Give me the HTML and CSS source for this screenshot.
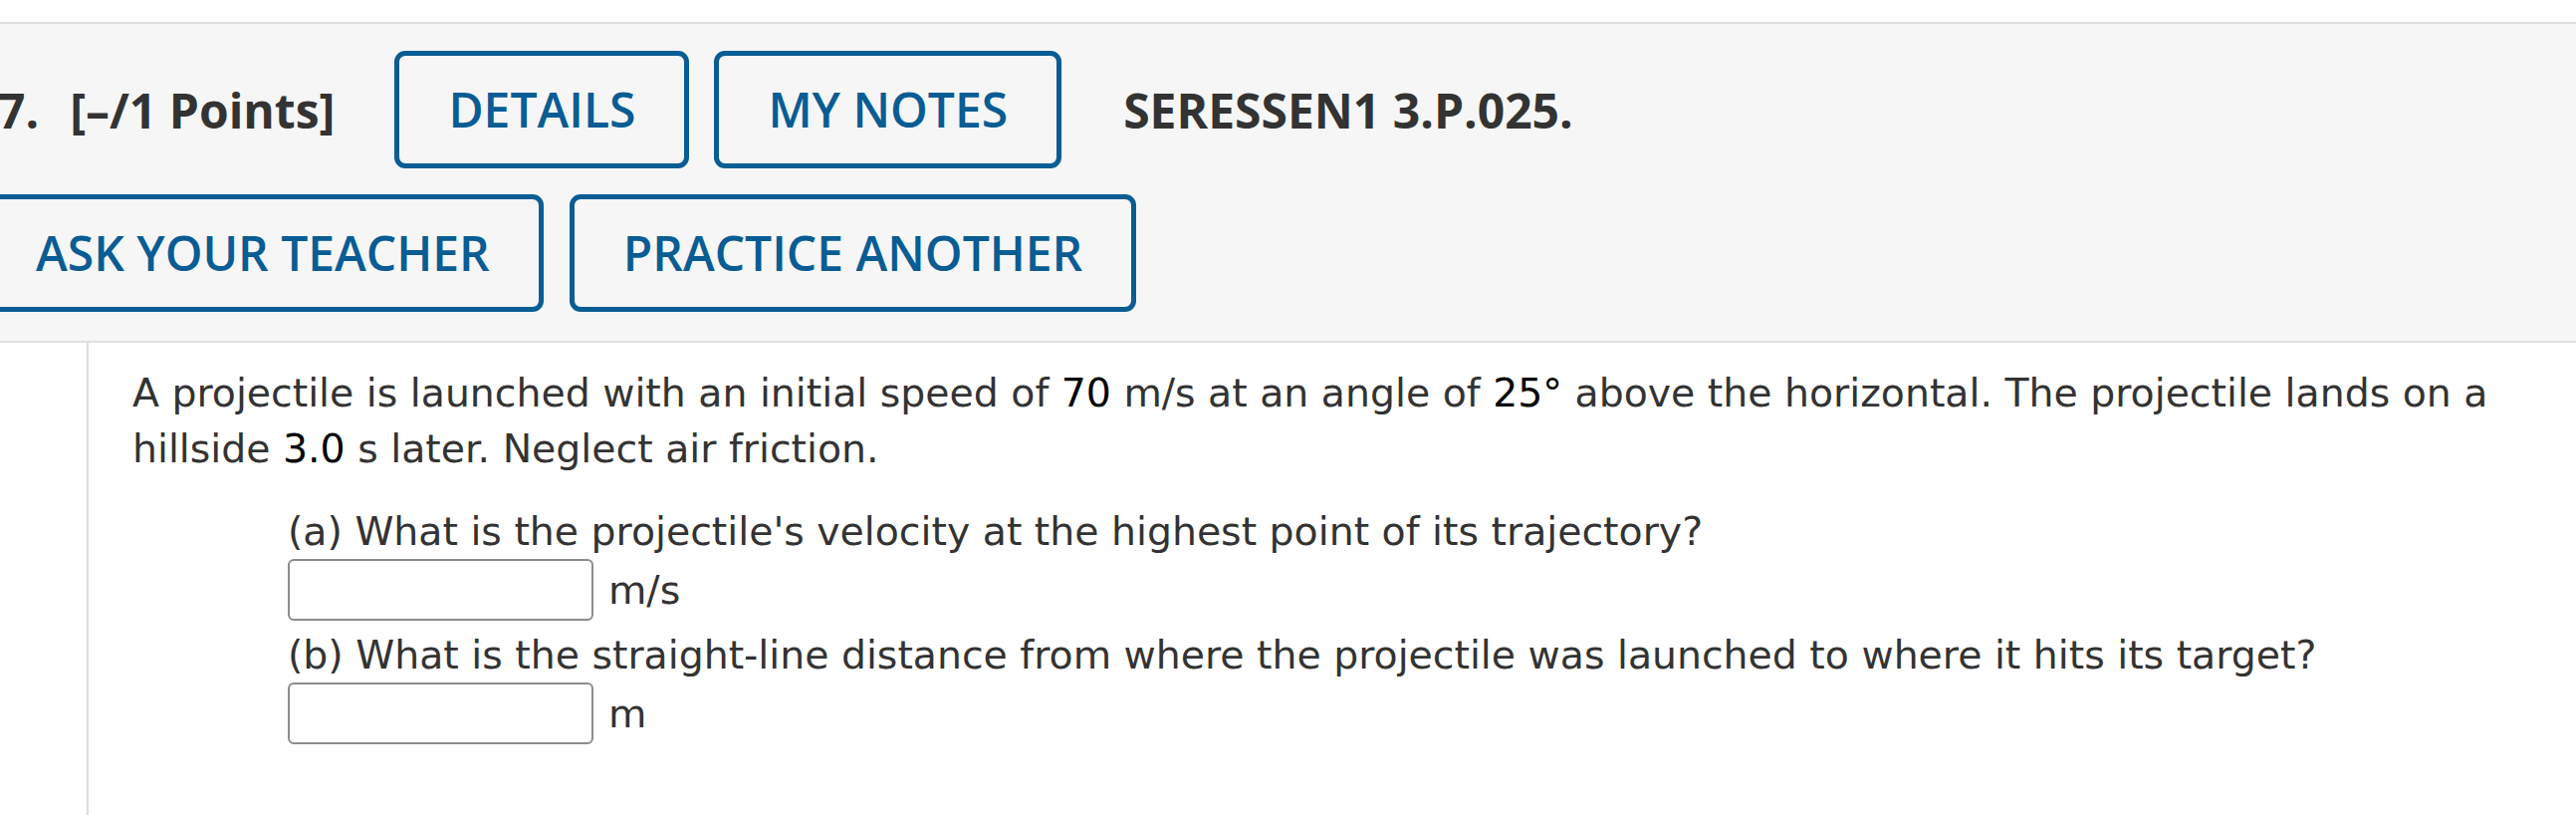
FILE: index.html
```html
<!DOCTYPE html>
<html lang="en">
<head>
<meta charset="utf-8">
<title>SERESSEN1 3.P.025.</title>
<link rel="stylesheet" href="styles.css">
</head>
<body>
<div class="question">
  <div class="q-header">
    <div class="q-row q-row-top">
      <span class="q-num">7.</span>
      <span class="q-points">[&ndash;/1 Points]</span>
      <button class="q-btn" type="button">DETAILS</button>
      <button class="q-btn" type="button">MY NOTES</button>
      <span class="q-code">SERESSEN1 3.P.025.</span>
    </div>
    <div class="q-row q-row-bottom">
      <button class="q-btn" type="button">ASK YOUR TEACHER</button>
      <button class="q-btn" type="button">PRACTICE ANOTHER</button>
    </div>
  </div>
  <div class="q-body">
    <p class="q-text">A projectile is launched with an initial speed of <span class="num">70</span> m/s at an angle of <span class="num">25&deg;</span> above the horizontal. The projectile lands on a hillside <span class="num">3.0</span> s later. Neglect air friction.</p>
    <div class="q-parts">
      <div class="q-part">
        <div class="q-prompt">(a) What is the projectile's velocity at the highest point of its trajectory?</div>
        <div class="q-answer"><input class="answer-box" type="text" aria-label="velocity"><span class="unit">m/s</span></div>
      </div>
      <div class="q-part">
        <div class="q-prompt">(b) What is the straight-line distance from where the projectile was launched to where it hits its target?</div>
        <div class="q-answer"><input class="answer-box" type="text" aria-label="distance"><span class="unit">m</span></div>
      </div>
    </div>
  </div>
</div>
</body>
</html>
```
FILE: styles.css
```css
html, body {
  margin: 0;
  padding: 0;
  background: #ffffff;
  overflow: hidden;
}

.question {
  padding-top: 22px;
}

.q-header {
  background: #f6f6f6;
  border-top: 2px solid #e0e0e0;
  border-bottom: 2px solid #e0e0e0;
  padding: 27px 0 29px 0;
  display: flex;
  flex-direction: column;
  gap: 26px;
  font-family: "Open Sans", "Liberation Sans", sans-serif;
}

.q-row {
  display: flex;
  align-items: center;
}

.q-row-top {
  margin-left: -2px;
}

.q-row-bottom {
  margin-left: -18px;
  gap: 26px;
}

.q-num,
.q-points,
.q-code {
  font-weight: 700;
  font-size: 48px;
  color: #333333;
  white-space: nowrap;
}

.q-points {
  margin-left: 31px;
  margin-right: 60px;
}

.q-code {
  margin-left: 62px;
}

.q-btn {
  font-family: "Open Sans", "Liberation Sans", sans-serif;
  font-weight: 600;
  font-size: 48px;
  line-height: 62px;
  color: #095c94;
  background: transparent;
  border: 5px solid #095c94;
  border-radius: 11px;
  padding: 23px 49px;
  margin: 0;
  white-space: nowrap;
}

.q-row-top .q-btn + .q-btn {
  margin-left: 25px;
}

.q-body {
  margin-left: 87px;
  border-left: 2px solid #dddddd;
  padding: 22px 0 0 44px;
  min-height: 460px;
  font-family: "DejaVu Sans", Verdana, sans-serif;
  font-size: 39.4px;
  line-height: 56px;
  color: #333333;
  max-width: 2400px;
}

.q-text {
  margin: 0;
}

.num {
  color: #000000;
}

.q-parts {
  margin: 27px 0 0 156px;
  display: flex;
  flex-direction: column;
  gap: 6px;
}

.q-answer {
  display: flex;
  align-items: center;
  gap: 15px;
}

.answer-box {
  width: 307px;
  height: 62px;
  box-sizing: border-box;
  border: 2px solid #8c8c8c;
  border-radius: 6px;
  background: #ffffff;
  margin: 0;
  padding: 0 8px;
  font-family: inherit;
  font-size: inherit;
}

.unit {
  color: #333333;
}
```
